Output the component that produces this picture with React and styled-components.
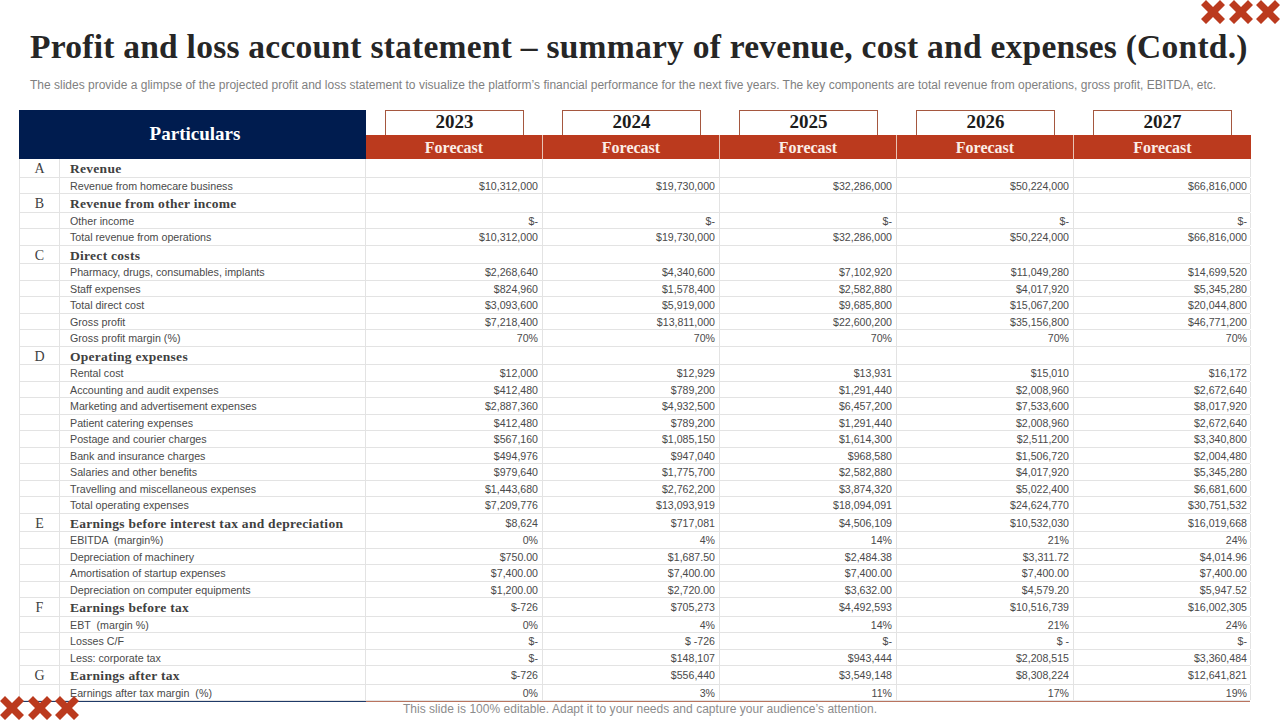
import React from 'react'
import styled, { createGlobalStyle } from 'styled-components'

const YEARS = ['2023', '2024', '2025', '2026', '2027']

const ROWS = [
  { mark: 'A', label: 'Revenue' },
  { label: 'Revenue from homecare business', values: ['$10,312,000', '$19,730,000', '$32,286,000', '$50,224,000', '$66,816,000'] },
  { mark: 'B', label: 'Revenue from other income' },
  { label: 'Other income', values: ['$-', '$-', '$-', '$-', '$-'] },
  { label: 'Total revenue from operations', values: ['$10,312,000', '$19,730,000', '$32,286,000', '$50,224,000', '$66,816,000'] },
  { mark: 'C', label: 'Direct costs' },
  { label: 'Pharmacy, drugs, consumables, implants', values: ['$2,268,640', '$4,340,600', '$7,102,920', '$11,049,280', '$14,699,520'] },
  { label: 'Staff expenses', values: ['$824,960', '$1,578,400', '$2,582,880', '$4,017,920', '$5,345,280'] },
  { label: 'Total direct cost', values: ['$3,093,600', '$5,919,000', '$9,685,800', '$15,067,200', '$20,044,800'] },
  { label: 'Gross profit', values: ['$7,218,400', '$13,811,000', '$22,600,200', '$35,156,800', '$46,771,200'] },
  { label: 'Gross profit margin (%)', values: ['70%', '70%', '70%', '70%', '70%'] },
  { mark: 'D', label: 'Operating expenses' },
  { label: 'Rental cost', values: ['$12,000', '$12,929', '$13,931', '$15,010', '$16,172'] },
  { label: 'Accounting and audit expenses', values: ['$412,480', '$789,200', '$1,291,440', '$2,008,960', '$2,672,640'] },
  { label: 'Marketing and advertisement expenses', values: ['$2,887,360', '$4,932,500', '$6,457,200', '$7,533,600', '$8,017,920'] },
  { label: 'Patient catering expenses', values: ['$412,480', '$789,200', '$1,291,440', '$2,008,960', '$2,672,640'] },
  { label: 'Postage and courier charges', values: ['$567,160', '$1,085,150', '$1,614,300', '$2,511,200', '$3,340,800'] },
  { label: 'Bank and insurance charges', values: ['$494,976', '$947,040', '$968,580', '$1,506,720', '$2,004,480'] },
  { label: 'Salaries and other benefits', values: ['$979,640', '$1,775,700', '$2,582,880', '$4,017,920', '$5,345,280'] },
  { label: 'Travelling and miscellaneous expenses', values: ['$1,443,680', '$2,762,200', '$3,874,320', '$5,022,400', '$6,681,600'] },
  { label: 'Total operating expenses', values: ['$7,209,776', '$13,093,919', '$18,094,091', '$24,624,770', '$30,751,532'] },
  { mark: 'E', label: 'Earnings before interest tax and depreciation', values: ['$8,624', '$717,081', '$4,506,109', '$10,532,030', '$16,019,668'] },
  { label: 'EBITDA  (margin%)', values: ['0%', '4%', '14%', '21%', '24%'] },
  { label: 'Depreciation of machinery', values: ['$750.00', '$1,687.50', '$2,484.38', '$3,311.72', '$4,014.96'] },
  { label: 'Amortisation of startup expenses', values: ['$7,400.00', '$7,400.00', '$7,400.00', '$7,400.00', '$7,400.00'] },
  { label: 'Depreciation on computer equipments', values: ['$1,200.00', '$2,720.00', '$3,632.00', '$4,579.20', '$5,947.52'] },
  { mark: 'F', label: 'Earnings before tax', values: ['$-726', '$705,273', '$4,492,593', '$10,516,739', '$16,002,305'] },
  { label: 'EBT  (margin %)', values: ['0%', '4%', '14%', '21%', '24%'] },
  { label: 'Losses C/F', values: ['$-', '$ -726', '$-', '$ -', '$-'] },
  { label: 'Less: corporate tax', values: ['$-', '$148,107', '$943,444', '$2,208,515', '$3,360,484'] },
  { mark: 'G', label: 'Earnings after tax', values: ['$-726', '$556,440', '$3,549,148', '$8,308,224', '$12,641,821'] },
  { label: 'Earnings after tax margin  (%)', values: ['0%', '3%', '11%', '17%', '19%'] },
]

const GlobalStyle = createGlobalStyle`
  html, body {
    margin: 0;
    background: #fff;
  }
`

const Slide = styled.div`
  position: relative;
  width: 1280px;
  height: 720px;
  overflow: hidden;
  display: flex;
  flex-direction: column;
  font-family: 'Liberation Sans', Arial, sans-serif;
  background: #fff;
`

const Title = styled.h1`
  margin: 0;
  padding: 28px 0 0 30px;
  height: 50px;
  font-family: 'Liberation Serif', 'Times New Roman', serif;
  font-weight: 700;
  font-size: 33.5px;
  letter-spacing: 0.25px;
  line-height: 38px;
  color: #262626;
  white-space: nowrap;
`

const Subtitle = styled.p`
  margin: 0;
  padding: 0 0 0 30px;
  height: 32px;
  font-size: 12px;
  line-height: 14px;
  color: #7f7f7f;
  white-space: nowrap;
`

const Table = styled.div`
  margin-left: 19px;
  width: 1231px;
`

const Head = styled.div`
  display: grid;
  grid-template-columns: 347px repeat(5, 177px);
  grid-template-rows: 25px 24px;
`

const Particulars = styled.div`
  grid-row: 1 / span 2;
  display: flex;
  align-items: center;
  justify-content: center;
  padding: 0 0 2px 5px;
  background: #001c4f;
  color: #fff;
  font-family: 'Liberation Serif', serif;
  font-weight: 700;
  font-size: 19px;
`

const YearSlot = styled.div`
  padding: 0 19px;
`

const YearTab = styled.div`
  height: 100%;
  box-sizing: border-box;
  border: 1px solid #a5573f;
  border-bottom: 0;
  text-align: center;
  color: #1c1c1c;
  font-family: 'Liberation Serif', serif;
  font-weight: 700;
  font-size: 19px;
  line-height: 22px;
`

const Forecast = styled.div`
  grid-row: 2;
  box-sizing: border-box;
  border-right: 1px solid #e8c4b6;
  background: #bb3a1e;
  color: #fbeee8;
  text-align: center;
  font-family: 'Liberation Serif', serif;
  font-weight: 700;
  font-size: 16px;
  line-height: 25px;

  &:last-child {
    border-right: 0;
  }
`

const Row = styled.div`
  display: grid;
  grid-template-columns: 41px 306px repeat(5, 177px);
  height: ${(p) => (p.$head ? 18.5 : 16.5)}px;
  box-sizing: border-box;
  border-bottom: 1px solid #e3e3e3;

  &:last-of-type {
    border-bottom: 0;
  }
`

const Cell = styled.div`
  box-sizing: border-box;
  border-right: 1px solid #e3e3e3;
  white-space: pre;
  overflow: hidden;
`

const MarkCell = styled(Cell)`
  border-left: 1px solid #e3e3e3;
  text-align: center;
  color: #404040;
  font-family: 'Liberation Serif', serif;
  font-size: 14px;
  line-height: 19px;
`

const LabelCell = styled(Cell)`
  padding-left: 10px;
  color: ${(p) => (p.$head ? '#404040' : '#4a4a4a')};
  font-family: ${(p) => (p.$head ? "'Liberation Serif', serif" : "'Liberation Sans', sans-serif")};
  font-weight: ${(p) => (p.$head ? 700 : 400)};
  font-size: ${(p) => (p.$head ? 13.5 : 10.7)}px;
  letter-spacing: ${(p) => (p.$head ? 0.28 : 0)}px;
  line-height: ${(p) => (p.$head ? 19 : 16)}px;
`

const ValueCell = styled(Cell)`
  padding-right: 4px;
  text-align: right;
  color: #4a4a4a;
  font-size: 10.6px;
  line-height: ${(p) => (p.$head ? 18 : 16)}px;

  &:last-child {
    padding-right: 3px;
  }
`

const BottomRule = styled.div`
  display: grid;
  grid-template-columns: 347px 1fr;
  height: 1px;
`

const RuleSegment = styled.div`
  background: ${(p) => p.$color};
`

const Footnote = styled.div`
  text-align: center;
  font-size: 12px;
  letter-spacing: 0.03px;
  line-height: 14px;
  color: #8c8c8c;
`

const CrossRow = styled.div`
  position: absolute;
  display: flex;
  gap: 3.5px;
  ${(p) => (p.$corner === 'top' ? 'top: 0; right: 0;' : 'bottom: 0; left: 0;')}
`

const Cross = () => (
  <svg width="24" height="24" viewBox="0 0 24 24">
    <path d="M0 5 L5 0 L12 7 L19 0 L24 5 L17 12 L24 19 L19 24 L12 17 L5 24 L0 19 L7 12 Z" fill="#bb3a1e" />
  </svg>
)

const Crosses = ({ corner }) => (
  <CrossRow $corner={corner}>
    <Cross />
    <Cross />
    <Cross />
  </CrossRow>
)

const App = () => (
  <Slide>
    <GlobalStyle />
    <Crosses corner="top" />
    <Title>Profit and loss account statement – summary of revenue, cost and expenses (Contd.)</Title>
    <Subtitle>
      The slides provide a glimpse of the projected profit and loss statement to visualize the platform’s financial performance for the next five years. The key components are total revenue from operations, gross profit, EBITDA,  etc.
    </Subtitle>
    <Table>
      <Head>
        <Particulars>Particulars</Particulars>
        {YEARS.map((year) => (
          <YearSlot key={year}>
            <YearTab>{year}</YearTab>
          </YearSlot>
        ))}
        {YEARS.map((year) => (
          <Forecast key={year}>Forecast</Forecast>
        ))}
      </Head>
      {ROWS.map((row) => {
        const head = Boolean(row.mark)
        return (
          <Row key={row.label} $head={head}>
            <MarkCell>{row.mark}</MarkCell>
            <LabelCell $head={head}>{row.label}</LabelCell>
            {YEARS.map((year, i) => (
              <ValueCell key={year} $head={head}>
                {row.values ? row.values[i] : ''}
              </ValueCell>
            ))}
          </Row>
        )
      })}
      <BottomRule>
        <RuleSegment $color="#1f3a68" />
        <RuleSegment $color="#b9745f" />
      </BottomRule>
    </Table>
    <Footnote>This slide is 100% editable. Adapt it to your needs and capture your audience’s attention.</Footnote>
    <Crosses corner="bottom" />
  </Slide>
)

export default App
